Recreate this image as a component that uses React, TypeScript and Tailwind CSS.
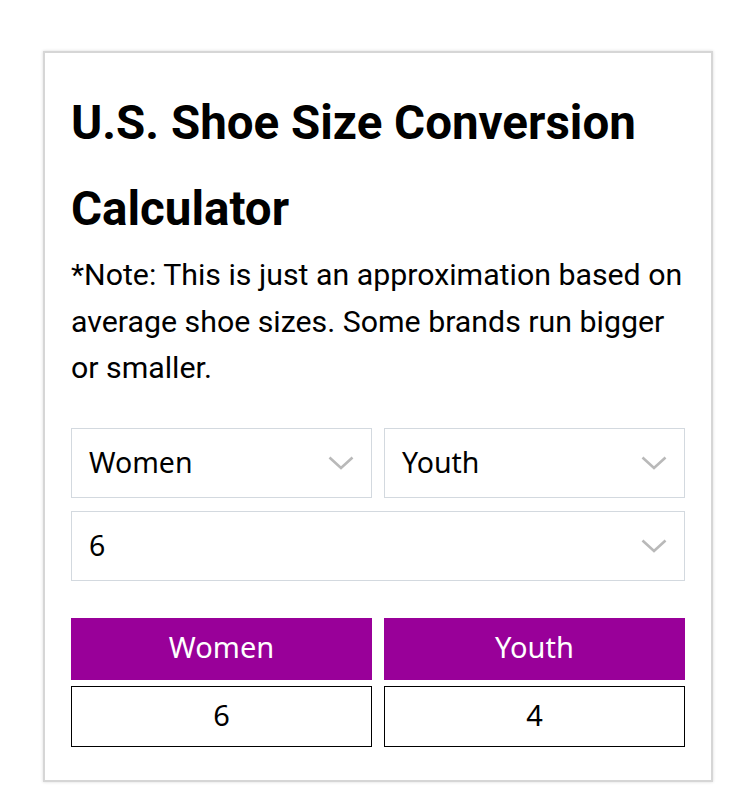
import React from "react";

function Chevron() {
  return (
    <svg width="26" height="14" viewBox="0 0 26 14" fill="none" className="shrink-0">
      <path d="M1.5 1.5 L13 12 L24.5 1.5" stroke="#b9b9b9" strokeWidth="2.6" />
    </svg>
  );
}

function Select({ value, className = "" }: { value: string; className?: string }) {
  return (
    <div
      className={`h-[70px] border border-[#d3d9df] bg-white flex items-center justify-between pl-[17px] pr-[17px] text-[28.5px] text-black ${className}`}
      style={{ fontFamily: '"Noto Sans", sans-serif' }}
    >
      <span>{value}</span>
      <Chevron />
    </div>
  );
}

export default function App() {
  return (
    <div className="min-h-[810px] bg-white pt-[51px] pl-[43px]">
      <div
        className="w-[670px] h-[731px] border-2 border-[#d6d6d6] shadow-[0_0_3px_rgba(0,0,0,0.15)] bg-white pl-[26px] pr-[26px] pt-[27px]"
        style={{ fontFamily: "Roboto, sans-serif" }}
      >
        <h1 className="text-[47.5px] leading-[86px] font-bold text-black">
          U.S. Shoe Size Conversion Calculator
        </h1>
        <p className="text-[30.3px] leading-[46.5px] text-black">
          *Note: This is just an approximation based on average shoe sizes. Some brands run bigger or smaller.
        </p>
        <div className="mt-[36px] grid grid-cols-2 gap-x-[12px] gap-y-[13px]">
          <Select value="Women" />
          <Select value="Youth" />
          <Select value="6" className="col-span-2" />
        </div>
        <div
          className="mt-[37px] grid grid-cols-2 gap-x-[12px] gap-y-[6px]"
          style={{ fontFamily: '"Noto Sans", sans-serif' }}
        >
          <div className="h-[62px] bg-[#990099] text-white text-[29px] flex items-center justify-center pb-[3px]">Women</div>
          <div className="h-[62px] bg-[#990099] text-white text-[29px] flex items-center justify-center pb-[3px]">Youth</div>
          <div className="h-[61px] border border-black text-black text-[29px] flex items-center justify-center pb-[2px]">6</div>
          <div className="h-[61px] border border-black text-black text-[29px] flex items-center justify-center pb-[2px]">4</div>
        </div>
      </div>
    </div>
  );
}
